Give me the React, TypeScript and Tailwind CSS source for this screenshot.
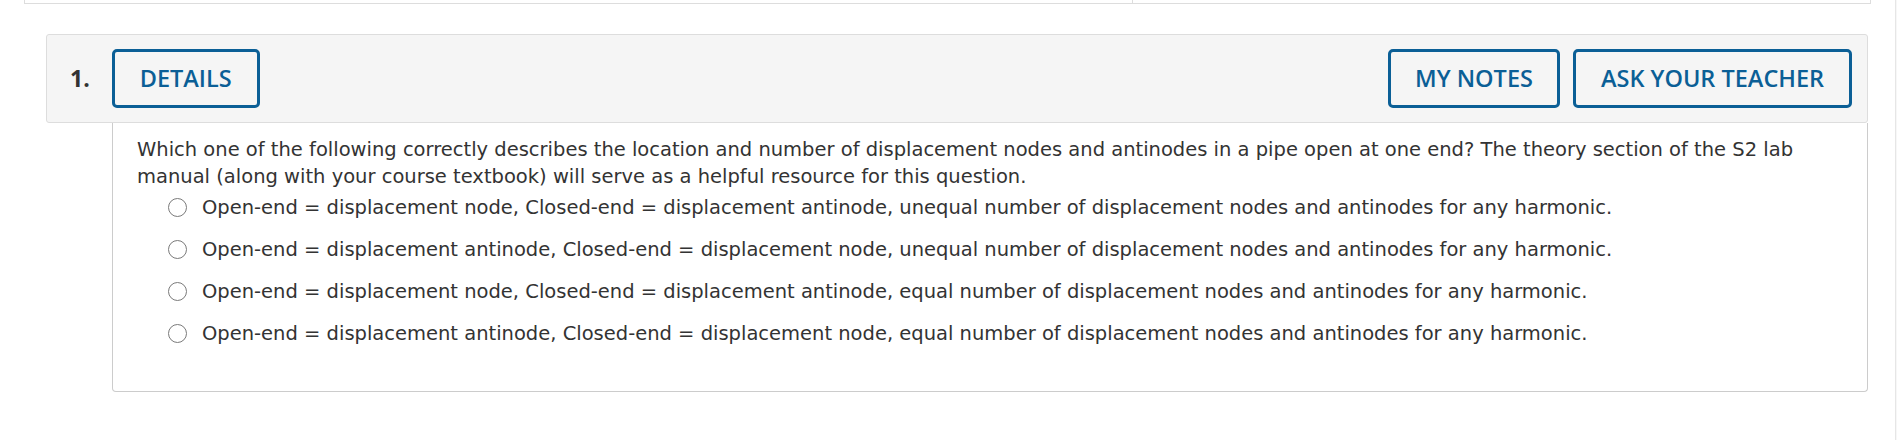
import React from "react";

const options = [
  "Open-end = displacement node, Closed-end = displacement antinode, unequal number of displacement nodes and antinodes for any harmonic.",
  "Open-end = displacement antinode, Closed-end = displacement node, unequal number of displacement nodes and antinodes for any harmonic.",
  "Open-end = displacement node, Closed-end = displacement antinode, equal number of displacement nodes and antinodes for any harmonic.",
  "Open-end = displacement antinode, Closed-end = displacement node, equal number of displacement nodes and antinodes for any harmonic.",
];

export default function App() {
  return (
    <div className="flex min-h-[440px] w-full bg-white">
      <div className="flex-1">
        {/* top remnant box */}
        <div className="ml-[24px] flex h-[4px] w-[1847px] border-x border-b border-[#dddddd]">
          <div className="w-[1108px] border-r border-[#dddddd]" />
        </div>

        {/* question header */}
        <div className="ml-[46px] mt-[30px] w-[1822px]">
          <div className="flex items-center rounded-[3px] border border-[#dddddd] bg-[#f5f5f5] py-[14px] pl-[23px] pr-[15px] font-['Open_Sans',sans-serif]">
            <span className="mr-[22px] text-[23px] font-bold text-[#333333]">1.</span>
            <button className="flex h-[59px] w-[148px] items-center justify-center rounded-[5px] border-[3px] border-[#0b5f96] text-[23.5px] font-semibold text-[#0b5f96]">
              DETAILS
            </button>
            <div className="flex-1" />
            <button className="flex h-[59px] w-[172px] items-center justify-center rounded-[5px] border-[3px] border-[#0b5f96] text-[23.5px] font-semibold text-[#0b5f96]">
              MY NOTES
            </button>
            <button className="ml-[13px] flex h-[59px] w-[279px] items-center justify-center rounded-[5px] border-[3px] border-[#0b5f96] text-[23.5px] font-semibold text-[#0b5f96]">
              ASK YOUR TEACHER
            </button>
          </div>

          {/* question body */}
          <div className="ml-[66px] rounded-b-[4px] border-x border-b border-[#cccccc] pb-[41px] pl-[24px] pr-[24px] pt-[13px] font-['DejaVu_Sans',sans-serif] text-[19.5px] leading-[27px] text-[#333333]">
            <p>
              Which one of the following correctly describes the location and number of displacement nodes and antinodes in a pipe open at one end? The theory section of the S2 lab manual (along with your course textbook) will serve as a helpful resource for this question.
            </p>
            <div className="flex flex-col gap-[8px]">
              {options.map((o) => (
                <label key={o} className="flex h-[34px] items-center pl-[31px]">
                  <span className="mr-[15px] inline-block h-[19px] w-[19px] shrink-0 rounded-full border-[1.5px] border-[#7a7a7a] bg-white" />
                  <span>{o}</span>
                </label>
              ))}
            </div>
          </div>
        </div>
      </div>
      <div className="w-[2px] border-l border-[#e6e6e6] bg-[#f7f7f7]" />
    </div>
  );
}
